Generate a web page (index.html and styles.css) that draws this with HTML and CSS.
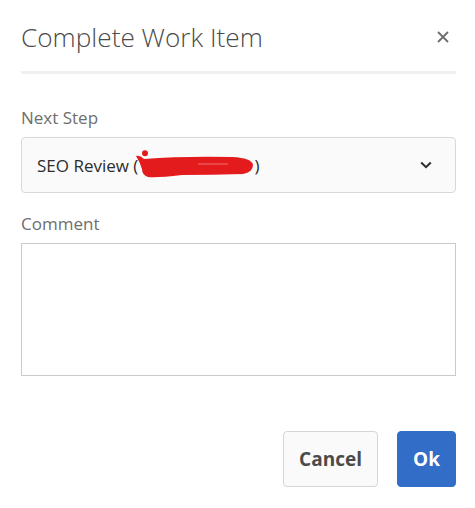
FILE: index.html
```html
<!DOCTYPE html>
<html lang="en">
<head>
<meta charset="utf-8">
<title>Complete Work Item</title>
<link rel="stylesheet" href="styles.css">
</head>
<body>
<div class="dialog">
  <div class="dialog-header">
    <h1 class="dialog-title">Complete Work Item</h1>
    <button class="close-btn" aria-label="Close">
      <svg width="12" height="12" viewBox="0 0 12 12"><path d="M1 1 L11 11 M11 1 L1 11" stroke="#6e6e6e" stroke-width="1.8" fill="none"/></svg>
    </button>
  </div>
  <div class="divider"></div>
  <div class="field field-step">
    <label class="field-label">Next Step</label>
    <div class="select">
      <span class="select-value">SEO Review (<span class="redact"><svg width="122" height="30" viewBox="0 0 122 30"><circle cx="13" cy="3.2" r="3" fill="#e41b1d"/><path d="M4 6 Q8 5 12 9 Q50 6 100 7 Q120 8 121 15 Q121 22 111 24 Q80 25 50 25 Q25 28 16 27 Q10 25 10 19 Q8 12 4 6 Z" fill="#e41b1d"/><path d="M66 14 L96 14" stroke="#f07070" stroke-width="1"/></svg></span>)</span>
      <svg class="chevron" width="12" height="8" viewBox="0 0 12 8"><path d="M1.2 1.5 L6 6.2 L10.8 1.5" stroke="#2c2c2c" stroke-width="2" fill="none"/></svg>
    </div>
  </div>
  <div class="field field-comment">
    <label class="field-label">Comment</label>
    <div class="textarea"></div>
  </div>
  <div class="actions">
    <button class="btn btn-secondary">Cancel</button>
    <button class="btn btn-primary">Ok</button>
  </div>
</div>
</body>
</html>
```

FILE: styles.css
```css
* { box-sizing: border-box; }
html, body { margin: 0; padding: 0; background: #ffffff; }
body { font-family: "Open Sans", "Noto Sans", sans-serif; color: #4b4b4b; }

.dialog {
  width: 475px;
  height: 508px;
  padding: 0 19px 0 21px;
  display: flex;
  flex-direction: column;
}

.dialog-header {
  height: 71px;
  padding-top: 3px;
  display: flex;
  align-items: center;
  justify-content: space-between;
}

.dialog-title {
  margin: 0;
  font-size: 26.2px;
  font-weight: 300;
  color: #4b4b4b;
}

.close-btn {
  border: 0;
  background: none;
  padding: 0;
  margin-right: 7px;
  width: 12px;
  height: 12px;
  display: flex;
}

.divider {
  height: 3px;
  background: #f0f0f0;
}

.field { display: flex; flex-direction: column; }
.field-step { margin-top: 32px; }

.field-label {
  font-size: 17px;
  line-height: 24px;
  color: #6e6e6e;
}

.select {
  margin-top: 7px;
  height: 56px;
  border: 1px solid #d8d8d8;
  border-radius: 4px;
  background: #fafafa;
  display: flex;
  align-items: center;
  justify-content: space-between;
  padding: 0 23px 0 15px;
}

.select-value {
  font-size: 17px;
  color: #2c2c2c;
  display: flex;
  align-items: center;
}

.redact {
  display: inline-block;
  width: 122px;
  height: 30px;
  margin-left: -6px;
  margin-right: 0;
}

.redact svg { display: block; }

.chevron { display: block; }

.field-comment { margin-top: 19px; }

.textarea {
  margin-top: 7px;
  height: 133px;
  border: 1px solid #cacaca;
  background: #ffffff;
}

.actions {
  margin-top: 55px;
  display: flex;
  justify-content: flex-end;
  gap: 19px;
}

.btn {
  height: 56px;
  border-radius: 4px;
  font-family: "Open Sans", "Noto Sans", sans-serif;
  font-size: 19px;
  font-weight: 700;
  padding: 0;
}

.btn-secondary {
  width: 95px;
  background: #fafafa;
  border: 1px solid #d6d6d6;
  color: #4b4b4b;
}

.btn-primary {
  width: 59px;
  background: #326ec8;
  border: 1px solid #326ec8;
  color: #ffffff;
}
```
